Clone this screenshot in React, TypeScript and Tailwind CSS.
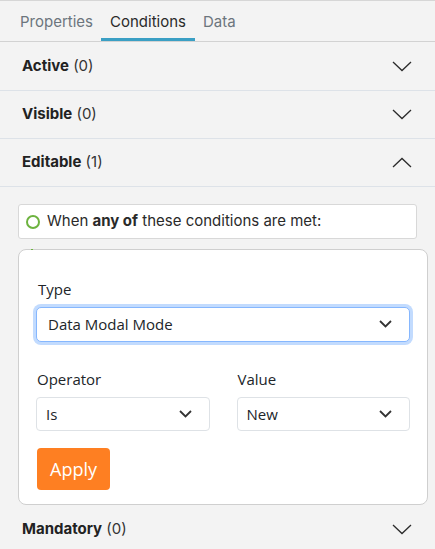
import { useState } from 'react';

function Chevron({ up = false }: { up?: boolean }) {
  return (
    <svg width="20" height="11" viewBox="0 0 20 11" fill="none" className="shrink-0">
      <path
        d={up ? 'M1 10 L10 1.5 L19 10' : 'M1 1 L10 9.5 L19 1'}
        stroke="#2b2b2b"
        strokeWidth="1.3"
      />
    </svg>
  );
}

function SmallChevron() {
  return (
    <svg width="13" height="8" viewBox="0 0 13 8" fill="none" className="shrink-0">
      <path d="M1 1 L6.5 6.5 L12 1" stroke="#333" strokeWidth="1.8" />
    </svg>
  );
}

function Row({ title, count, open = false, first = false }: { title: string; count: number; open?: boolean; first?: boolean }) {
  return (
    <div
      className={
        first
          ? 'flex h-[49px] items-center justify-between border-b border-[#dde2e8] pl-[22px] pr-[23px]'
          : 'flex h-12 items-center justify-between border-b border-[#dde2e8] pl-[22px] pr-[23px]'
      }
    >
      <span className="text-[15px] text-[#222]">
        <span className="font-bold">{title}</span> <span className="text-[#333]">({count})</span>
      </span>
      <Chevron up={open} />
    </div>
  );
}

function Select({ value, focused = false }: { value: string; focused?: boolean }) {
  return (
    <div
      className={
        focused
          ? 'flex h-[35px] items-center justify-between rounded-[5px] border border-[#86b7fe] bg-white pl-[11px] pr-[17px] ring-[3px] ring-[#c2dbfe]'
          : 'flex h-[34px] items-center justify-between rounded-[4px] border border-[#dee2e6] bg-white pl-[9px] pr-[17px]'
      }
    >
      <span className="text-[15px] text-[#212529]">{value}</span>
      <SmallChevron />
    </div>
  );
}

export default function App() {
  const [tab] = useState('Conditions');
  return (
    <div
      className="h-[549px] w-[435px] overflow-hidden border-t border-[#d6d6d6] bg-[#f3f3f3]"
      style={{ fontFamily: 'Inter, "Noto Sans", sans-serif' }}
    >
      <div className="flex h-[41px] items-end border-b border-[#d2d2d2] pl-[12px]">
        {['Properties', 'Conditions', 'Data'].map((t) => (
          <div
            key={t}
            className={
              t === tab
                ? 'border-b-[3px] border-[#3a9fc4] px-[9px] pb-[5px] text-[15px] text-[#2a2a2a]'
                : 'px-[8px] pb-[8px] text-[15px] text-[#6c757d]'
            }
          >
            {t}
          </div>
        ))}
      </div>
      <Row title="Active" count={0} first />
      <Row title="Visible" count={0} />
      <Row title="Editable" count={1} open />
      <div className="pl-[18px] pr-[7px] pt-[17px]">
        <div className="mr-[11px] flex h-[35px] items-center gap-[7px] rounded-[3px] border border-[#d8d8d8] bg-white pl-[7px]">
          <span className="h-[14px] w-[14px] rounded-full border-2 border-[#6db33f]" />
          <span className="text-[15px] text-[#2a2a2a]">
            When <span className="font-bold">any of</span> these conditions are met:
          </span>
        </div>
        <div
          className="relative mt-[10px] h-[256px] rounded-[8px] border border-[#cfcfcf] bg-white px-[17px] pt-[28px]"
          style={{ fontFamily: '"Open Sans", "Noto Sans", sans-serif' }}
        >
          <span className="absolute -top-px left-[12px] h-px w-[2px] bg-[#6db33f]" />
          <div className="pl-[2px] text-[15px] text-[#212529]">Type</div>
          <div className="mt-[6px]">
            <Select value="Data Modal Mode" focused />
          </div>
          <div className="mt-[26px] grid grid-cols-2 gap-[27px]">
            <div>
              <div className="pl-[1px] text-[15px] text-[#212529]">Operator</div>
              <div className="mt-[7px]">
                <Select value="Is" />
              </div>
            </div>
            <div>
              <div className="pl-[1px] text-[15px] text-[#212529]">Value</div>
              <div className="mt-[7px]">
                <Select value="New" />
              </div>
            </div>
          </div>
          <button className="ml-[1px] mt-[17px] flex h-[42px] w-[73px] items-center justify-center rounded-[4px] bg-[#fe7f22] text-[18px] text-white">
            Apply
          </button>
        </div>
      </div>
      <div className="flex h-12 items-center justify-between pl-[22px] pr-[23px]">
        <span className="text-[15px] text-[#222]">
          <span className="font-bold">Mandatory</span> <span className="text-[#333]">(0)</span>
        </span>
        <Chevron />
      </div>
    </div>
  );
}
